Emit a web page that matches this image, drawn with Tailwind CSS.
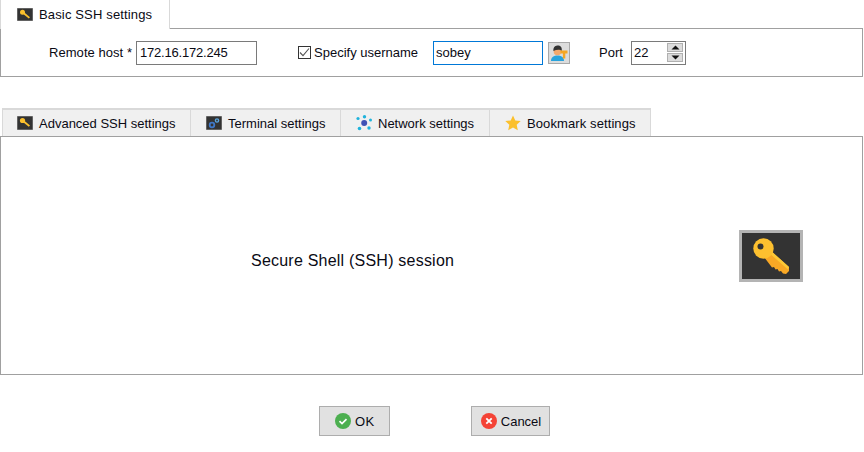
<!DOCTYPE html>
<html><head><meta charset="utf-8"><script src="https://cdn.jsdelivr.net/npm/@tailwindcss/browser@4"></script></head>
<body class="bg-white">
<div class="w-[864px] h-[452px] overflow-hidden bg-white text-[13px] text-[#0a0a14] font-['Liberation_Sans',Arial,sans-serif]">
  <!-- top tab -->
  <div class="h-[28px] flex">
    <div class="w-[170px] h-[29px] pl-[16px] gap-[6px] flex items-center border-l border-r border-[#d9d9d9] bg-white relative z-10">
      <svg width="16" height="13" viewBox="0 0 16 13"><rect width="16" height="13" fill="#333" stroke="#aaa" stroke-width=".8"/><g fill="#fbc02d"><circle cx="5.500" cy="4.300" r="2.500"/><path d="M6.500 3.800l6.500 5.400-1.200 1.400-6.500-5.400z"/></g></svg>
      <span class="leading-none pb-px tracking-[0.15px]">Basic SSH settings</span>
    </div>
  </div>
  <div class="w-[863px] h-[49px] border border-[#a0a0a0] flex items-center relative">
    <span class="ml-[48px] w-[87px] tracking-[0.05px]">Remote host *</span>
    <div class="w-[121px] h-[24px] border border-[#7a7a7a] px-[3px] flex items-center tracking-[-0.2px]">172.16.172.245</div>
    <div class="ml-[41px] w-[13px] h-[13px] border border-[#333] flex items-center justify-center shrink-0">
      <svg width="11" height="11" viewBox="0 0 11 11"><path d="M1 5.500l3 3.200L10 1.500" fill="none" stroke="#555" stroke-width="1.100"/></svg>
    </div>
    <span class="ml-[3px] w-[119px]">Specify username</span>
    <div class="w-[110px] h-[24px] border border-[#0078d7] px-[2px] flex items-center">sobey</div>
    <div class="ml-[5px] w-[22px] h-[22px] bg-[#dcdcdc] border border-[#a8a8a8] flex items-center justify-center">
      <svg width="18" height="18" viewBox="0 0 18 18"><path d="M1 17c0-4 3-5.500 6.500-5.500s6.500 1.500 6.500 5.500z" fill="#29a3dc"/><circle cx="7.500" cy="7.500" r="3.800" fill="#f2a86c"/><path d="M3.400 7C3 2.500 6 1.500 8 1.500s4.200 1.200 3.800 5.500C10 5.200 7 5.200 3.400 7z" fill="#333"/><path d="M10.500 6.500h7v3h-2.200v5h-2.400v-5h-2.400z" fill="#f5a623"/></svg>
    </div>
    <span class="ml-[29px] w-[32px]">Port</span>
    <div class="w-[55px] h-[24px] border border-[#7a7a7a] pl-[2px] pr-[2px] flex items-center justify-between">
      <span>22</span>
      <div class="flex flex-col gap-[1px]">
        <div class="w-[16px] h-[9px] bg-[#dcdcdc] border border-[#b0b0b0] flex items-center justify-center"><svg width="9" height="5" viewBox="0 0 9 5"><path d="M4.500 0.500L8.500 4.500H.5z" fill="#111"/></svg></div>
        <div class="w-[16px] h-[9px] bg-[#dcdcdc] border border-[#b0b0b0] flex items-center justify-center"><svg width="9" height="5" viewBox="0 0 9 5"><path d="M.5 .5h8L4.500 4.500z" fill="#111"/></svg></div>
      </div>
    </div>
  </div>
  <!-- lower tabs -->
  <div class="mt-[31px] h-[28px] flex pl-[2px]">
    <div class="w-[188px] bg-[#f0f0f0] border-t-2 border-l border-[#d9d9d9] pl-[14px] gap-[6px] flex items-center">
      <svg width="16" height="14" viewBox="0 0 16 14"><rect width="16" height="14" fill="#333" stroke="#aaa" stroke-width=".8"/><g fill="#fbc02d"><circle cx="5.500" cy="4.500" r="2.600"/><path d="M6.500 4l6.500 5.400-1.200 1.400-6.500-5.400z"/></g></svg>
      <span class="leading-none">Advanced SSH settings</span>
    </div>
    <div class="w-[150px] bg-[#f0f0f0] border-t-2 border-l border-[#d9d9d9] pl-[15px] gap-[6px] flex items-center">
      <svg width="16" height="14" viewBox="0 0 16 14"><rect width="16" height="14" fill="#333" stroke="#aaa" stroke-width=".8"/><circle cx="6" cy="9" r="2.300" fill="none" stroke="#3f78c9" stroke-width="1.800"/><circle cx="11" cy="4.500" r="1.600" fill="none" stroke="#5aa5e0" stroke-width="1.400"/></svg>
      <span class="leading-none">Terminal settings</span>
    </div>
    <div class="w-[149px] bg-[#f0f0f0] border-t-2 border-l border-[#d9d9d9] pl-[15px] gap-[6px] flex items-center">
      <svg width="16" height="16" viewBox="0 0 16 16"><g fill="#1fb3dc"><circle cx="8.500" cy="1.800" r="1.700"/><circle cx="2" cy="3.500" r="1.600"/><circle cx="14.500" cy="5" r="1.500"/><circle cx="3.500" cy="13.500" r="1.800"/><circle cx="13" cy="13" r="1.700"/></g><circle cx="8.200" cy="8" r="3" fill="#3f51b5"/></svg>
      <span class="leading-none">Network settings</span>
    </div>
    <div class="w-[162px] bg-[#f0f0f0] border-t-2 border-l border-r border-[#d9d9d9] pl-[15px] gap-[6px] flex items-center">
      <svg width="16" height="16" viewBox="0 0 16 16"><path d="M8 .5l2.300 5 5.400.6-4 3.700 1.100 5.400L8 12.500l-4.800 2.700 1.100-5.400-4-3.700 5.400-.6z" fill="#fbc02d"/></svg>
      <span class="leading-none tracking-[0.1px]">Bookmark settings</span>
    </div>
  </div>
  <div class="w-[863px] h-[239px] border border-[#a0a0a0] flex items-center">
    <span class="ml-[250px] w-[488px] pt-[10px] text-[16px] leading-none tracking-[0.22px]">Secure Shell (SSH) session</span>
    <div class="w-[64px] h-[52px] bg-[#333] border-[3px] border-[#b4b4b4] flex items-center justify-center">
      <svg width="38" height="38" viewBox="0 0 38 38"><path d="M12 20L18 13 37 30v4l-3 3-3-.5-2-2.500-2 .5-1.500-2.500-2 .5-1.500-2.500-2 .5z" fill="#f9a825"/><path d="M18 13L37 30l-1 2.500L16 15z" fill="#fdc936"/><circle cx="11.500" cy="11.500" r="10.200" fill="#fdc02f"/><circle cx="8.500" cy="9.500" r="3" fill="#333"/></svg>
    </div>
  </div>
  <!-- buttons -->
  <div class="mt-[31px] flex pl-[319px] gap-[81px]">
    <div class="w-[71px] h-[30px] bg-[#e1e1e1] border border-[#adadad] flex items-center pl-[15px] gap-[4px]">
      <svg width="16" height="16" viewBox="0 0 16 16"><circle cx="8" cy="8" r="8" fill="#4caf50"/><path d="M4.500 8.200l2.500 2.400 4.500-4.400" fill="none" stroke="#fff" stroke-width="1.700"/></svg>
      <span class="pt-px tracking-[0.3px]">OK</span>
    </div>
    <div class="w-[79px] h-[30px] bg-[#e1e1e1] border border-[#adadad] flex items-center justify-center gap-[4px]">
      <svg width="16" height="16" viewBox="0 0 16 16" class="ml-px"><circle cx="8" cy="8" r="8" fill="#f44336"/><path d="M5.300 5.300l5.400 5.400M10.700 5.300l-5.400 5.400" fill="none" stroke="#fff" stroke-width="1.800"/></svg>
      <span class="pt-px">Cancel</span>
    </div>
  </div>
</div>
</body></html>
